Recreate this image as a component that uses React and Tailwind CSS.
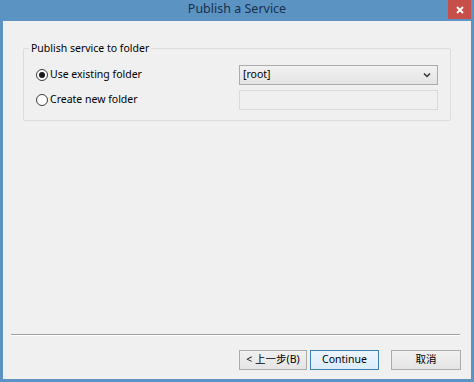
export default function App() {
  return (
    <div
      className="w-[474px] h-[382px] bg-[#5b94c2] flex flex-col text-[10.5px] text-black"
      style={{ fontFamily: '"Noto Sans", "Noto Sans CJK SC", sans-serif' }}
    >
      {/* title bar */}
      <div className="h-[21px] flex items-start">
        <div className="w-[26px]" />
        <div className="flex-1 h-[19px] flex items-center justify-center text-[12.5px] text-[#1c2f4a]">
          Publish a Service
        </div>
        <div className="w-[23px] h-[19px] bg-[#c64f49] flex items-center justify-center mr-[3px]">
          <svg width="8" height="8" viewBox="0 0 8 8">
            <path d="M1 1 L7 7 M7 1 L1 7" stroke="#fff" strokeWidth="1.8" />
          </svg>
        </div>
      </div>

      {/* body */}
      <div className="flex-1 mx-[3px] mb-[3px] bg-[#f0f0f0] flex flex-col">
        <fieldset className="mt-[20px] mx-[20px] h-[80px] border border-[#dcdcdc] rounded-[2px] px-[12px]">
          <legend className="-ml-[7px] px-[2px] leading-[14px]">Publish service to folder</legend>

          <div className="flex items-center h-[20px] mt-[10px]">
            <span className="w-[12px] h-[12px] rounded-full border border-[#3b3b3b] bg-white flex items-center justify-center">
              <span className="w-[6px] h-[6px] rounded-full bg-[#1a1a1a]" />
            </span>
            <span className="ml-[2px] w-[189px]">Use existing folder</span>
            <div className="flex-1 h-[20px] border border-[#acacac] bg-gradient-to-b from-[#f2f2f2] to-[#e4e4e4] flex items-center pl-[3px] pr-[6px]">
              <span className="flex-1">[root]</span>
              <svg width="8" height="6" viewBox="0 0 8 6">
                <path d="M1 1.5 L4 4.5 L7 1.5" stroke="#333" strokeWidth="1.5" fill="none" />
              </svg>
            </div>
          </div>

          <div className="flex items-center h-[20px] mt-[5px]">
            <span className="w-[12px] h-[12px] rounded-full border border-[#3b3b3b] bg-white" />
            <span className="ml-[2px] w-[189px]">Create new folder</span>
            <div className="flex-1 h-[20px] border border-[#dadada] bg-[#f0f0f0]" />
          </div>
        </fieldset>

        <div className="flex-1" />

        <div className="ml-[8px] mr-[11px] h-[1px] bg-[#a0a0a0] border-b border-white box-content" />

        <div className="flex justify-end items-center pt-[14px] pb-[9px] pr-[10px]">
          <button className="w-[68px] h-[20px] border border-[#acacac] bg-gradient-to-b from-[#f0f0f0] to-[#e5e5e5]">
            &lt; 上一步(B)
          </button>
          <button className="ml-[3px] w-[69px] h-[20px] border border-[#3c7fb1] bg-gradient-to-b from-[#ecf4fc] to-[#dcecfc]">
            Continue
          </button>
          <button className="ml-[12px] w-[70px] h-[20px] border border-[#acacac] bg-gradient-to-b from-[#f0f0f0] to-[#e5e5e5]">
            取消
          </button>
        </div>
      </div>
    </div>
  );
}
